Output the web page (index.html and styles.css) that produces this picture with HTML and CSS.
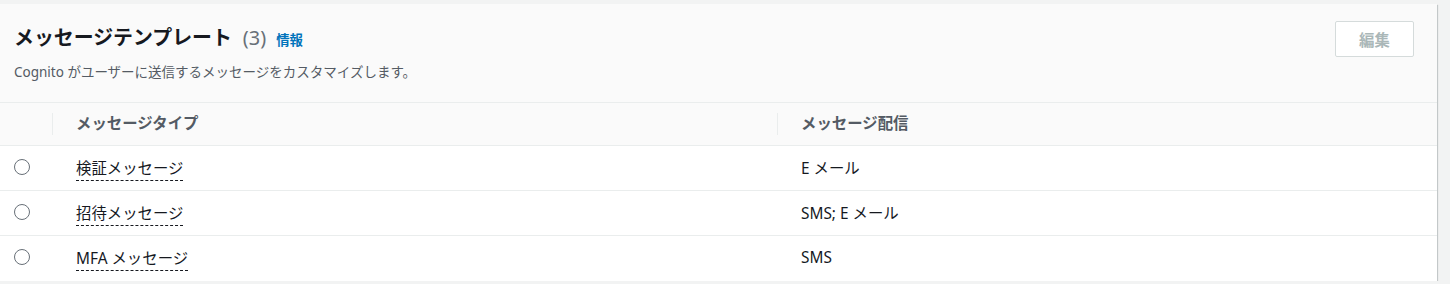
FILE: index.html
```html
<!DOCTYPE html>
<html lang="ja">
<head>
    <meta charset="UTF-8">
    <title>メッセージテンプレート</title>
    <link rel="stylesheet" href="styles.css">
</head>
<body>
    <div class="container">
        <header class="panel-header">
            <div class="title-block">
                <h2>メッセージテンプレート<span class="count">(3)</span><a class="info" href="#">情報</a></h2>
                <p>Cognito がユーザーに送信するメッセージをカスタマイズします。</p>
            </div>
            <button class="edit-btn" disabled>編集</button>
        </header>

        <table class="templates">
            <thead>
                <tr>
                    <th class="col-select"></th>
                    <th class="col-type"><span class="th-inner">メッセージタイプ</span></th>
                    <th class="col-delivery"><span class="th-inner">メッセージ配信</span></th>
                </tr>
            </thead>
            <tbody>
                <tr>
                    <td class="col-select"><span class="radio"></span></td>
                    <td class="col-type"><span class="term">検証メッセージ</span></td>
                    <td class="col-delivery">E メール</td>
                </tr>
                <tr>
                    <td class="col-select"><span class="radio"></span></td>
                    <td class="col-type"><span class="term">招待メッセージ</span></td>
                    <td class="col-delivery">SMS; E メール</td>
                </tr>
                <tr>
                    <td class="col-select"><span class="radio"></span></td>
                    <td class="col-type"><span class="term">MFA メッセージ</span></td>
                    <td class="col-delivery">SMS</td>
                </tr>
            </tbody>
        </table>
    </div>
</body>
</html>
```

FILE: styles.css
```css
* {
    margin: 0;
    padding: 0;
    box-sizing: border-box;
}

body {
    background-color: #f2f3f3;
    font-family: 'Noto Sans', 'Noto Sans CJK JP', sans-serif;
    color: #16191f;
    padding: 4px 13px 0 0;
}

.container {
    background-color: white;
    box-shadow: 0 1px 1px 0 rgba(0, 28, 36, 0.3), 1px 1px 1px 0 rgba(0, 28, 36, 0.15);
    margin-left: -1px;
}

.panel-header {
    display: flex;
    justify-content: space-between;
    align-items: flex-start;
    background-color: #fafafa;
    border-bottom: 1px solid #eaeded;
    padding: 17px 23px 21px 15px;
}

.title-block {
    padding-top: 4px;
}

.title-block h2 {
    font-size: 19.9px;
    line-height: 26px;
    font-weight: 700;
    color: #16191f;
}

.title-block .count {
    font-weight: 400;
    color: #687078;
    margin-left: 11px;
}

.title-block .info {
    font-size: 13.4px;
    font-weight: 700;
    color: #0073bb;
    text-decoration: none;
    margin-left: 10px;
}

.title-block p {
    font-size: 13.5px;
    line-height: 18px;
    color: #545b64;
    margin-top: 10px;
}

.edit-btn {
    width: 79px;
    height: 36px;
    background-color: white;
    border: 1px solid #d5dbdb;
    border-radius: 2px;
    color: #aab7b8;
    font-family: inherit;
    font-size: 15.4px;
    font-weight: 700;
}

.templates {
    width: 100%;
    border-collapse: collapse;
    font-size: 15.4px;
}

.templates th {
    background-color: #fafafa;
    height: 42px;
    text-align: left;
    font-weight: 700;
    color: #545b64;
    border-bottom: 1px solid #eaeded;
    padding: 0;
}

.th-inner {
    display: block;
    border-left: 1px solid #eaeded;
    padding-left: 23px;
    line-height: 22px;
}

.templates td {
    height: 45px;
    border-bottom: 1px solid #eaeded;
    padding: 0 0 1px 24px;
}

.templates tbody tr:last-child td {
    border-bottom: none;
    height: 46px;
    padding-bottom: 2px;
}

.templates .col-select {
    width: 53px;
    padding-left: 15px;
}

.templates th.col-select {
    padding-left: 0;
}

.templates .col-type {
    width: 725px;
}

.radio {
    display: block;
    width: 16px;
    height: 16px;
    border: 1.5px solid #687078;
    border-radius: 50%;
}

.term {
    border-bottom: 1px dashed #16191f;
    padding-bottom: 1px;
}
```
